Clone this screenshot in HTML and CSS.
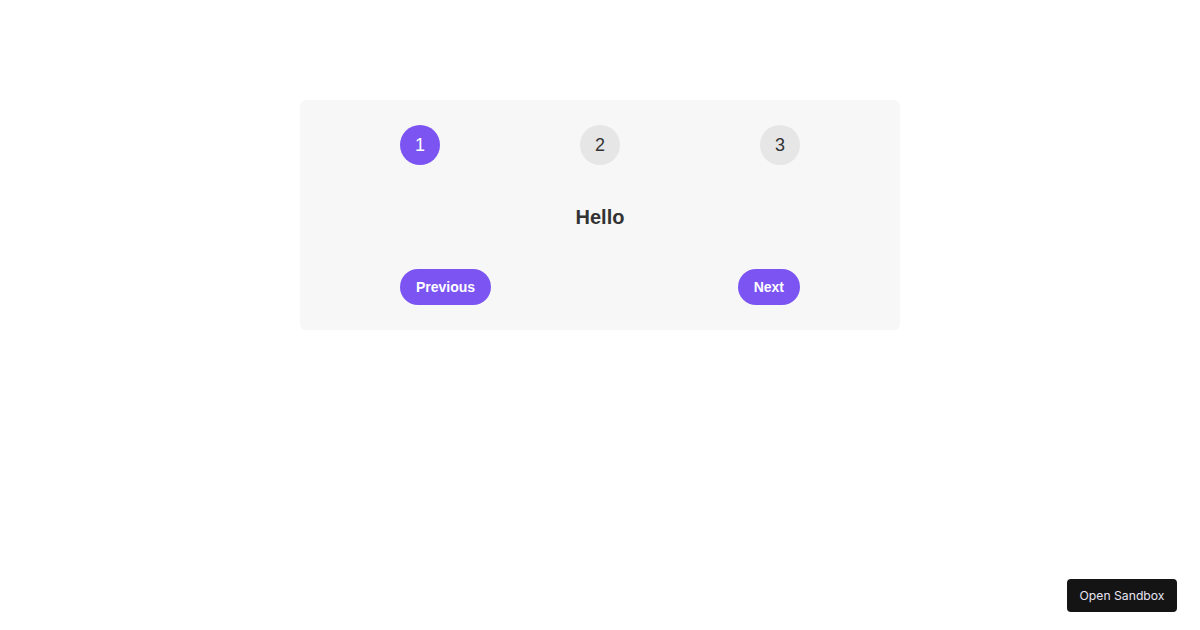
FILE: index.html
```html
<!DOCTYPE html>
<html>
<head>
<meta charset="utf-8">
<link rel="stylesheet" href="styles.css">
</head>
<body>
<div class="card">
  <div class="steps">
    <div class="step active">1</div>
    <div class="step">2</div>
    <div class="step">3</div>
  </div>
  <div class="content">Hello</div>
  <div class="actions">
    <button class="btn">Previous</button>
    <button class="btn">Next</button>
  </div>
</div>
<a class="sandbox">Open Sandbox</a>
</body>
</html>
```

FILE: styles.css
```css
html, body {
  margin: 0;
  padding: 0;
  background: #ffffff;
  font-family: "Liberation Sans", Arial, sans-serif;
  color: #333333;
}
body {
  padding-top: 100px;
}
.card {
  width: 600px;
  box-sizing: border-box;
  margin: 0 auto;
  background: #f7f7f7;
  border-radius: 6px;
  padding: 25px 100px;
  display: flex;
  flex-direction: column;
  gap: 40px;
}
.steps {
  display: flex;
  justify-content: space-between;
}
.step {
  width: 40px;
  height: 40px;
  border-radius: 50%;
  background: #e6e6e6;
  color: #333333;
  font-size: 18px;
  display: flex;
  align-items: center;
  justify-content: center;
}
.step.active {
  background: #7b54f2;
  color: #ffffff;
}
.content {
  text-align: center;
  font-size: 20px;
  font-weight: bold;
  line-height: 24px;
  color: #333333;
}
.actions {
  display: flex;
  justify-content: space-between;
}
.btn {
  border: none;
  background: #7b54f2;
  color: #ffffff;
  font-family: "Liberation Sans", Arial, sans-serif;
  font-size: 14px;
  font-weight: bold;
  line-height: 16px;
  padding: 10px 16px;
  border-radius: 18px;
  cursor: pointer;
}
.sandbox {
  position: fixed;
  right: 23px;
  bottom: 18px;
  background: #141414;
  color: #e8e4f4;
  font-family: Inter, "Liberation Sans", sans-serif;
  font-size: 12.2px;
  line-height: 15px;
  padding: 9px 12.5px;
  border-radius: 4px;
}
```
